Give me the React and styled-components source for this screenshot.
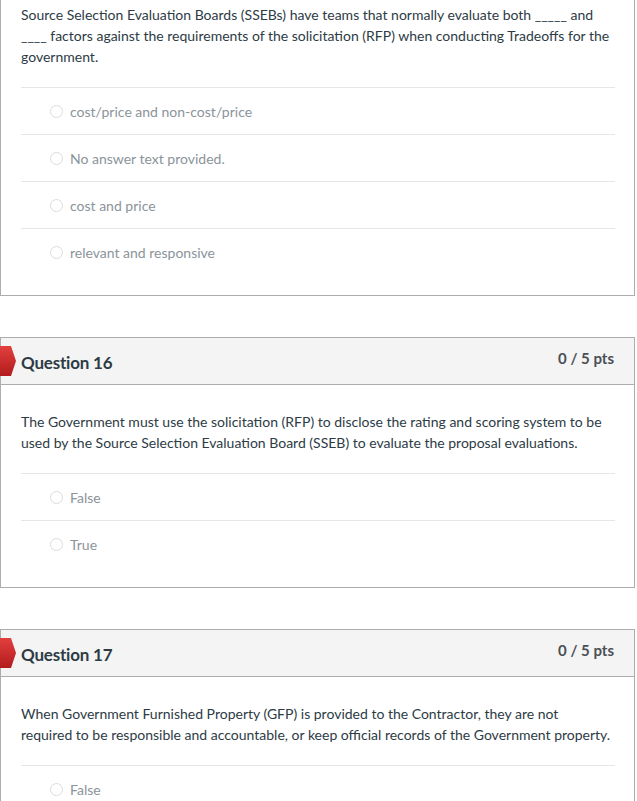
import React from "react"
import styled, { createGlobalStyle } from "styled-components"

const GlobalStyle = createGlobalStyle`
	html, body {
		margin: 0;
		padding: 0;
		background: #fff;
	}
	body {
		font-family: Lato, "Open Sans", sans-serif;
		color: #2d3b45;
	}
`

const questions = [
	{
		id: 15,
		clipped: true,
		text: "Source Selection Evaluation Boards (SSEBs) have teams that normally evaluate both _____ and ____ factors against the requirements of the solicitation (RFP) when conducting Tradeoffs for the government.",
		answers: [
			"cost/price and non-cost/price",
			"No answer text provided.",
			"cost and price",
			"relevant and responsive",
		],
	},
	{
		id: 16,
		text: "The Government must use the solicitation (RFP) to disclose the rating and scoring system to be used by the Source Selection Evaluation Board (SSEB) to evaluate the proposal evaluations.",
		answers: ["False", "True"],
	},
	{
		id: 17,
		text: "When Government Furnished Property (GFP) is provided to the Contractor, they are not required to be responsible and accountable, or keep official records of the Government property.",
		answers: ["False"],
	},
]

function Flag() {
	return (
		<FlagMark width="16" height="30" viewBox="0 0 16 30">
			<defs>
				<linearGradient id="flagRed" x1="0" y1="0" x2="0" y2="1">
					<stop offset="0" stopColor="#e2403f" />
					<stop offset="1" stopColor="#b31b1c" />
				</linearGradient>
			</defs>
			<polygon points="0,0 11,0 16,15 11,30 0,30" fill="url(#flagRed)" />
		</FlagMark>
	)
}

function Question({ q }) {
	return (
		<Card $clipped={q.clipped}>
			{!q.clipped && (
				<Header>
					<Flag />
					<Title>Question {q.id}</Title>
					<Points>0 / 5 pts</Points>
				</Header>
			)}
			<Body $clipped={q.clipped}>
				<QuestionText>{q.text}</QuestionText>
				<Answers>
					{q.answers.map((a) => (
						<Answer key={a}>
							<Radio />
							<AnswerLabel>{a}</AnswerLabel>
						</Answer>
					))}
				</Answers>
			</Body>
		</Card>
	)
}

export default function App() {
	return (
		<>
			<GlobalStyle />
			<Page>
				{questions.map((q) => (
					<Question key={q.id} q={q} />
				))}
			</Page>
		</>
	)
}

const Page = styled.div`
	width: 635px;
	display: flex;
	flex-direction: column;
	gap: 41px;
`

const Card = styled.div`
	box-sizing: border-box;
	width: 100%;
	border: 1px solid #adadad;
	border-top: ${(p) => (p.$clipped ? "none" : "1px solid #adadad")};
	background: #fff;
`

const Header = styled.div`
	position: relative;
	display: flex;
	align-items: center;
	justify-content: space-between;
	height: 46px;
	padding: 0 20px;
	background: #f4f4f4;
	border-bottom: 1px solid #adadad;
`

const FlagMark = styled.svg`
	position: absolute;
	left: -1px;
	top: 8px;
`

const Title = styled.div`
	margin-top: 3px;
	font-size: 17px;
	font-weight: 700;
	color: #2d3b45;
	letter-spacing: -0.2px;
`

const Points = styled.div`
	margin-bottom: 6px;
	font-size: 15px;
	font-weight: 700;
	color: #4a4f54;
`

const Body = styled.div`
	padding: ${(p) => (p.$clipped ? "4px" : "26px")} 19px 20px 20px;
`

const QuestionText = styled.div`
	padding-right: 3px;
	font-size: 14px;
	line-height: 21px;
	color: #2d3b45;
	margin-bottom: 20px;
`

const Answers = styled.div`
	display: flex;
	flex-direction: column;
`

const Answer = styled.div`
	display: flex;
	align-items: center;
	height: 47px;
	border-top: 1px solid #e6e6e6;
	box-sizing: border-box;
	padding-left: 29px;
`

const Radio = styled.span`
	box-sizing: border-box;
	width: 13px;
	height: 13px;
	border-radius: 50%;
	border: 1px solid #dcdcdc;
	background: #fff;
	margin-right: 7px;
`

const AnswerLabel = styled.span`
	font-size: 14px;
	color: #8b949a;
`
